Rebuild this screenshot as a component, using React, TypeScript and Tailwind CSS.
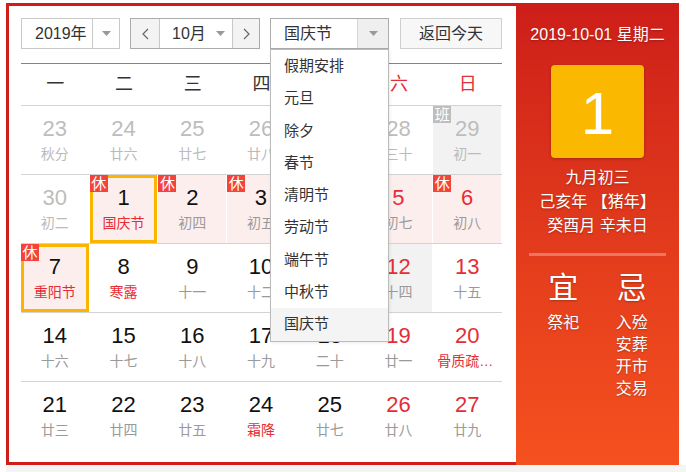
import React from "react";

type Day = {
  d: number;
  lunar: string;
  other?: boolean;
  festival?: boolean;
  bg?: "pink" | "gray";
  badge?: "休" | "班";
  sel?: boolean;
};

const weeks: Day[][] = [
  [
    { d: 23, lunar: "秋分", other: true },
    { d: 24, lunar: "廿六", other: true },
    { d: 25, lunar: "廿七", other: true },
    { d: 26, lunar: "廿八", other: true },
    { d: 27, lunar: "廿九", other: true },
    { d: 28, lunar: "三十", other: true },
    { d: 29, lunar: "初一", other: true, bg: "gray", badge: "班" },
  ],
  [
    { d: 30, lunar: "初二", other: true },
    { d: 1, lunar: "国庆节", festival: true, bg: "pink", badge: "休", sel: true },
    { d: 2, lunar: "初四", bg: "pink", badge: "休" },
    { d: 3, lunar: "初五", bg: "pink", badge: "休" },
    { d: 4, lunar: "初六", bg: "pink", badge: "休" },
    { d: 5, lunar: "初七", bg: "pink", badge: "休" },
    { d: 6, lunar: "初八", bg: "pink", badge: "休" },
  ],
  [
    { d: 7, lunar: "重阳节", festival: true, bg: "pink", badge: "休", sel: true },
    { d: 8, lunar: "寒露", festival: true },
    { d: 9, lunar: "十一" },
    { d: 10, lunar: "十二" },
    { d: 11, lunar: "十三" },
    { d: 12, lunar: "十四", bg: "gray", badge: "班" },
    { d: 13, lunar: "十五" },
  ],
  [
    { d: 14, lunar: "十六" },
    { d: 15, lunar: "十七" },
    { d: 16, lunar: "十八" },
    { d: 17, lunar: "十九" },
    { d: 18, lunar: "二十" },
    { d: 19, lunar: "廿一" },
    { d: 20, lunar: "骨质疏松日", festival: true },
  ],
  [
    { d: 21, lunar: "廿三" },
    { d: 22, lunar: "廿四" },
    { d: 23, lunar: "廿五" },
    { d: 24, lunar: "霜降", festival: true },
    { d: 25, lunar: "廿七" },
    { d: 26, lunar: "廿八" },
    { d: 27, lunar: "廿九" },
  ],
];

const weekdays = ["一", "二", "三", "四", "五", "六", "日"];

const holidays = ["假期安排", "元旦", "除夕", "春节", "清明节", "劳动节", "端午节", "中秋节", "国庆节"];

const Caret = () => (
  <svg width="9" height="5" viewBox="0 0 9 5">
    <path d="M0 0h9L4.5 5z" fill="#999" />
  </svg>
);

const Chevron = ({ right }: { right?: boolean }) => (
  <svg width="7" height="12" viewBox="0 0 7 12">
    <path
      d={right ? "M1 1l5 5-5 5" : "M6 1L1 6l5 5"}
      fill="none"
      stroke="#666"
      strokeWidth="1.2"
    />
  </svg>
);

function DayCell({ day, col }: { day: Day; col: number }) {
  const weekend = col >= 5;
  const numColor = day.other ? "text-[#bdbdbd]" : weekend ? "text-[#e52d36]" : "text-[#111]";
  const lunarColor = day.festival
    ? "text-[#e52d36]"
    : day.other
    ? "text-[#bbbbbb]"
    : "text-[#9a9a9a]";
  const bg =
    day.bg === "pink" ? "bg-[#fdeeee]" : day.bg === "gray" ? "bg-[#f2f2f2]" : "";

  return (
    <div
      className={`relative mr-px flex min-w-0 flex-col items-center ${bg} ${
        day.sel ? "border-[3px] border-[#fbb400] pt-[7px]" : "pt-[10px]"
      }`}
    >
      {day.badge && (
        <span
          className={`absolute -left-[3px] -top-[3px] z-10 h-[17px] w-[18px] text-center text-[15px] leading-[17px] text-white ${
            day.badge === "休" ? "bg-[#f4433a]" : "bg-[#bdbdbd]"
          } ${day.sel ? "" : "left-0 top-0"}`}
        >
          {day.badge}
        </span>
      )}
      <span className={`text-[22px] leading-[26px] ${numColor}`}>{day.d}</span>
      <span
        className={`mt-[2px] max-w-full truncate px-[4px] text-[14px] leading-[20px] ${lunarColor}`}
      >
        {day.lunar}
      </span>
    </div>
  );
}

export default function App() {
  return (
    <div className="font-['Liberation_Sans','Noto_Sans_CJK_SC',sans-serif] bg-white">
      <div className="pl-[6px] pt-[3px]">
        <div className="flex h-[462px] w-[673px]">
          {/* calendar side */}
          <div className="flex-1 border-y-[3px] border-l-[3px] border-[#cf1e1a] bg-white pl-[12px] pr-[14px] pt-[12px]">
            <div className="relative z-20 flex h-[31px] text-[16px] text-[#333]">
              <div className="flex w-[99px] border border-[#c9c9c9]">
                <span className="w-[70px] pl-[13px] leading-[29px]">2019年</span>
                <span className="flex flex-1 items-center justify-center border-l border-[#c9c9c9]">
                  <Caret />
                </span>
              </div>

              <div className="ml-[10px] flex w-[130px] border border-[#ababab]">
                <span className="flex w-[28px] items-center justify-center bg-[#f3f3f3]">
                  <Chevron />
                </span>
                <span className="flex flex-1 items-center border-x border-[#c9c9c9] bg-white pl-[12px]">
                  <span className="leading-[29px]">10月</span>
                  <span className="ml-[10px] flex">
                    <Caret />
                  </span>
                </span>
                <span className="flex w-[26px] items-center justify-center bg-[#f3f3f3]">
                  <Chevron right />
                </span>
              </div>

              <div className="relative ml-[10px] flex w-[119px] border border-[#ababab]">
                <span className="flex-1 pl-[13px] leading-[29px]">国庆节</span>
                <span className="flex w-[31px] items-center justify-center border-l border-[#d6d6d6] bg-[#efefef]">
                  <Caret />
                </span>
                <ul className="absolute -left-px top-[30px] w-[119px] border border-[#bbbbbb] bg-white shadow-[1px_1px_3px_rgba(0,0,0,0.08)]">
                  {holidays.map((h, i) => (
                    <li
                      key={h}
                      className={`h-[32.3px] pl-[13px] text-[15px] leading-[32.3px] text-[#333] ${
                        i === holidays.length - 1 ? "bg-[#f4f4f4]" : ""
                      }`}
                    >
                      {h}
                    </li>
                  ))}
                </ul>
              </div>

              <button className="ml-[11px] w-[102px] border border-[#cfcfcf] bg-[#f7f7f7] text-[16px] leading-[29px] text-[#333]">
                返回今天
              </button>
            </div>

            <div className="mt-[14px] border-t border-[#e85a50]">
              <div className="grid h-[42px] grid-cols-7 border-b border-[#d3d3d3] text-[18px]">
                {weekdays.map((w, i) => (
                  <span
                    key={w}
                    className={`flex items-center justify-center ${
                      i >= 5 ? "text-[#e52d36]" : "text-[#333]"
                    }`}
                  >
                    {w}
                  </span>
                ))}
              </div>
              {weeks.map((week, r) => (
                <div
                  key={r}
                  className={`grid h-[69px] grid-cols-7 ${
                    r < weeks.length - 1 ? "border-b border-[#d3d3d3]" : ""
                  }`}
                >
                  {week.map((day, c) => (
                    <DayCell key={c} day={day} col={c} />
                  ))}
                </div>
              ))}
            </div>
          </div>

          {/* today panel */}
          <div className="flex w-[163px] flex-col items-center bg-linear-to-b from-[#cd1d19] to-[#f5511f] text-white [text-shadow:0_1px_2px_rgba(0,0,0,0.25)]">
            <div className="mt-[20px] text-[16px] leading-[24px]">2019-10-01 星期二</div>
            <div className="mt-[18px] flex h-[93px] w-[93px] items-center justify-center rounded-[4px] bg-[#fbb800] pt-[4px] text-[60px] leading-none shadow-[0_1px_3px_rgba(0,0,0,0.25)] [text-shadow:none]">
              1
            </div>
            <div className="mt-[8px] text-center text-[16px] leading-[24px]">
              <div>九月初三</div>
              <div>己亥年 【猪年】</div>
              <div>癸酉月 辛未日</div>
            </div>
            <div className="mt-[15px] h-[3px] w-[137px] bg-white/30" />
            <div className="mt-[14px] grid w-[137px] grid-cols-2 text-center">
              <div>
                <div className="text-[30px] leading-[36px]">宜</div>
                <div className="mt-[6px] text-[16px] leading-[22px]">祭祀</div>
              </div>
              <div>
                <div className="text-[30px] leading-[36px]">忌</div>
                <div className="mt-[6px] text-[16px] leading-[22px]">
                  <div>入殓</div>
                  <div>安葬</div>
                  <div>开市</div>
                  <div>交易</div>
                </div>
              </div>
            </div>
          </div>
        </div>
      </div>
      <div className="ml-[6px] h-[7px] bg-[#f4f4f4]" />
    </div>
  );
}
